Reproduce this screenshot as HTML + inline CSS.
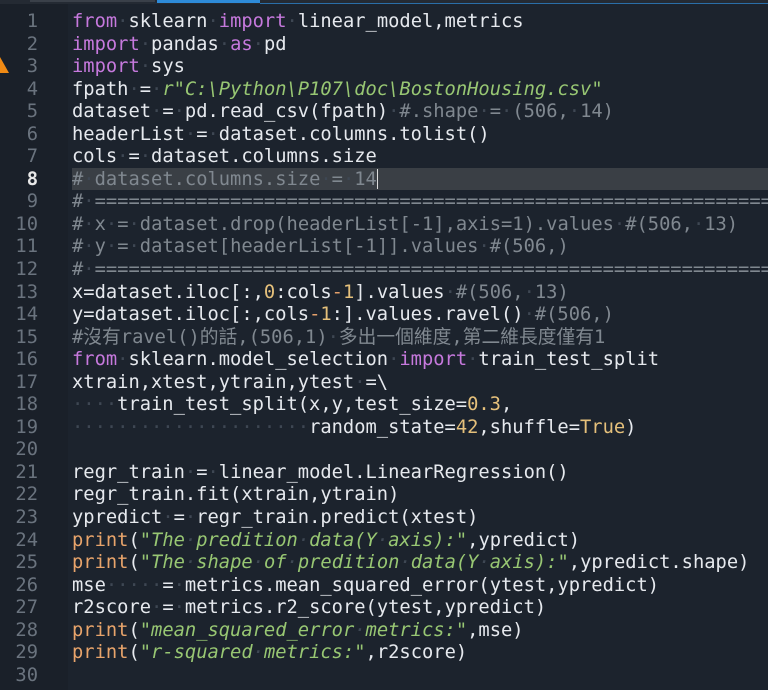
<!DOCTYPE html>
<html><head><meta charset="utf-8"><style>
html,body{margin:0;padding:0;width:768px;height:690px;overflow:hidden;background:#1c232d;}
#top{position:absolute;left:0;top:0;width:768px;height:4px;background:#242a33;}
#top .a{position:absolute;left:30px;top:0;width:125px;height:2px;background:#3a4049}
#top .b{position:absolute;left:157px;top:0;width:103px;height:3px;background:#2d8ad8}
#top .c{position:absolute;left:260px;top:3px;width:508px;height:1px;background:#2a6ea8}
#gut{position:absolute;left:0;top:4px;width:68px;height:686px;background:#1a2029;}
#hl{position:absolute;left:72px;top:168px;width:696px;height:22px;background:#3a3f45;}
#cur{position:absolute;left:377px;top:169px;width:1px;height:20px;background:#ddd;}
pre{margin:0;position:absolute;font-family:"DejaVu Sans Mono","Liberation Mono","Noto Sans CJK TC",monospace;font-size:18.75px;line-height:22.55px;white-space:pre;}
#nums{left:0;top:11px;width:38px;text-align:right;color:#6a737e;}
#nums b{color:#e8e8e8;}
#code{left:72px;top:11px;color:#e6e9ee;width:696px;overflow:hidden;}
.k{color:#c679dd}.s{color:#98c773;font-style:italic}.q{color:#98c773}.n{color:#e5c07b}.o{color:#e5a06b}
.c{color:#808890}.d{color:#3e4753}.p{color:#e8a46b}
#warn{position:absolute;left:-9px;top:57px;width:0;height:0;border-left:9px solid transparent;border-right:9px solid transparent;border-bottom:16px solid #f08a14;}
</style></head><body>
<div id="top"><div class="a"></div><div class="b"></div><div class="c"></div></div>
<div id="gut"></div>
<div id="warn"></div>
<div id="hl"></div>
<pre id="nums">1
2
3
4
5
6
7
<b>8</b>
9
10
11
12
13
14
15
16
17
18
19
20
21
22
23
24
25
26
27
28
29
30</pre>
<pre id="code"><span class="k">from</span><span class="d">·</span>sklearn<span class="d">·</span><span class="k">import</span><span class="d">·</span>linear_model,metrics
<span class="k">import</span><span class="d">·</span>pandas<span class="d">·</span><span class="k">as</span><span class="d">·</span>pd
<span class="k">import</span><span class="d">·</span>sys
fpath<span class="d">·</span>=<span class="d">·</span><span class="s">r"C:\Python\P107\doc\BostonHousing.csv</span><span class="q">"</span>
dataset<span class="d">·</span>=<span class="d">·</span>pd.read_csv(fpath)<span class="d">·</span><span class="c">#.shape<span class="d">·</span>=<span class="d">·</span>(506,<span class="d">·</span>14)</span>
headerList<span class="d">·</span>=<span class="d">·</span>dataset.columns.tolist()
cols<span class="d">·</span>=<span class="d">·</span>dataset.columns.size
<span class="c">#<span class="d">·</span>dataset.columns.size<span class="d">·</span>=<span class="d">·</span>14</span>
<span class="c">#<span class="d">·</span>==================================================================</span>
<span class="c">#<span class="d">·</span>x<span class="d">·</span>=<span class="d">·</span>dataset.drop(headerList[-1],axis=1).values<span class="d">·</span>#(506,<span class="d">·</span>13)</span>
<span class="c">#<span class="d">·</span>y<span class="d">·</span>=<span class="d">·</span>dataset[headerList[-1]].values<span class="d">·</span>#(506,)</span>
<span class="c">#<span class="d">·</span>==================================================================</span>
x=dataset.iloc[:,<span class="n">0</span>:cols<span class="o">-</span><span class="n">1</span>].values<span class="d">·</span><span class="c">#(506,<span class="d">·</span>13)</span>
y=dataset.iloc[:,cols<span class="o">-</span><span class="n">1</span>:].values.ravel()<span class="d">·</span><span class="c">#(506,)</span>
<span class="c">#沒有ravel()的話,(506,1)<span class="d">·</span>多出一個維度,第二維長度僅有1</span>
<span class="k">from</span><span class="d">·</span>sklearn.model_selection<span class="d">·</span><span class="k">import</span><span class="d">·</span>train_test_split
xtrain,xtest,ytrain,ytest<span class="d">·</span>=\
<span class="d">····</span>train_test_split(x,y,test_size=<span class="n">0.3</span>,
<span class="d">·····················</span>random_state=<span class="n">42</span>,shuffle=<span class="n">True</span>)

regr_train<span class="d">·</span>=<span class="d">·</span>linear_model.LinearRegression()
regr_train.fit(xtrain,ytrain)
ypredict<span class="d">·</span>=<span class="d">·</span>regr_train.predict(xtest)
<span class="p">print</span>(<span class="s">"The<span class="d">·</span>predition<span class="d">·</span>data(Y<span class="d">·</span>axis):</span><span class="q">"</span>,ypredict)
<span class="p">print</span>(<span class="s">"The<span class="d">·</span>shape<span class="d">·</span>of<span class="d">·</span>predition<span class="d">·</span>data(Y<span class="d">·</span>axis):</span><span class="q">"</span>,ypredict.shape)
mse<span class="d">·····</span>=<span class="d">·</span>metrics.mean_squared_error(ytest,ypredict)
r2score<span class="d">·</span>=<span class="d">·</span>metrics.r2_score(ytest,ypredict)
<span class="p">print</span>(<span class="s">"mean_squared_error<span class="d">·</span>metrics:</span><span class="q">"</span>,mse)
<span class="p">print</span>(<span class="s">"r-squared<span class="d">·</span>metrics:</span><span class="q">"</span>,r2score)
</pre>
<div id="cur"></div>
</body></html>
